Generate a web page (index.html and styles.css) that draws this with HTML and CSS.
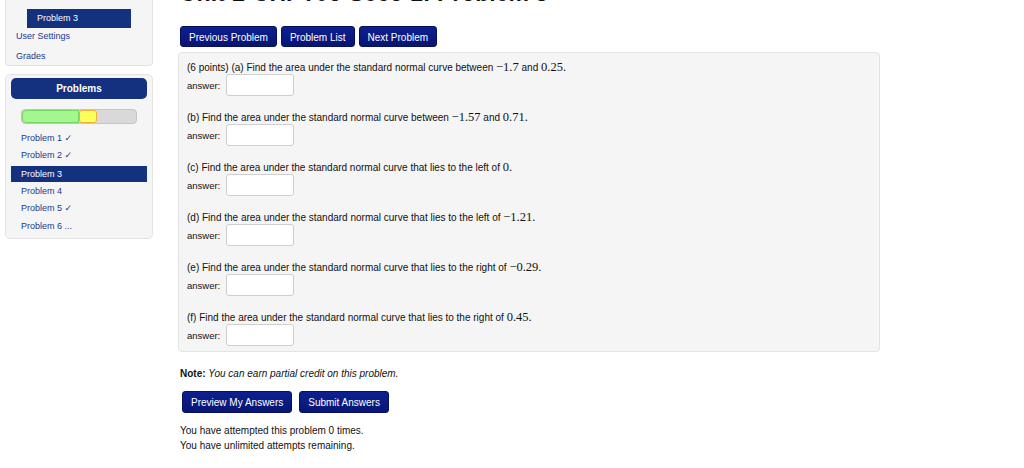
FILE: index.html
```html
<!DOCTYPE html>
<html lang="en">
<head>
    <meta charset="UTF-8">
    <title>Unit-2-CHPT06-Sec6-1: Problem 3</title>
    <link rel="stylesheet" href="styles.css">
</head>
<body>
    <div class="page">
        <div class="sidebar">
            <div class="navBox">
                <div class="navSet">Unit-2-CHPT06-Sec6-1</div>
                <div class="navCurrent">Problem 3</div>
                <div class="navLink">User Settings</div>
                <div class="navLink last">Grades</div>
            </div>
            <div class="probBox">
                <div class="probHead">Problems</div>
                <div class="progress">
                    <span class="done"></span>
                    <span class="partial"></span>
                </div>
                <ul class="probList">
                    <li>Problem 1 <span class="tick">&#10003;</span></li>
                    <li>Problem 2 <span class="tick">&#10003;</span></li>
                    <li class="active">Problem 3</li>
                    <li>Problem 4</li>
                    <li>Problem 5 <span class="tick">&#10003;</span></li>
                    <li>Problem 6 ...</li>
                </ul>
            </div>
        </div>
        <div class="main">
            <h1>Unit-2-CHPT06-Sec6-1: Problem 3</h1>
            <div class="topBtns">
                <span class="btn">Previous Problem</span>
                <span class="btn">Problem List</span>
                <span class="btn">Next Problem</span>
            </div>
            <div class="problem">
                <div class="part">
                    <p>(6 points) (a) Find the area under the standard normal curve between <span class="m">&minus;1.7</span> and <span class="m">0.25.</span></p>
                    <div class="answer">answer: <span class="input"></span></div>
                </div>
                <div class="part">
                    <p>(b) Find the area under the standard normal curve between <span class="m">&minus;1.57</span> and <span class="m">0.71.</span></p>
                    <div class="answer">answer: <span class="input"></span></div>
                </div>
                <div class="part">
                    <p>(c) Find the area under the standard normal curve that lies to the left of <span class="m">0.</span></p>
                    <div class="answer">answer: <span class="input"></span></div>
                </div>
                <div class="part">
                    <p>(d) Find the area under the standard normal curve that lies to the left of <span class="m">&minus;1.21.</span></p>
                    <div class="answer">answer: <span class="input"></span></div>
                </div>
                <div class="part">
                    <p>(e) Find the area under the standard normal curve that lies to the right of <span class="m">&minus;0.29.</span></p>
                    <div class="answer">answer: <span class="input"></span></div>
                </div>
                <div class="part">
                    <p>(f) Find the area under the standard normal curve that lies to the right of <span class="m">0.45.</span></p>
                    <div class="answer">answer: <span class="input"></span></div>
                </div>
            </div>
            <p class="note"><b>Note:</b> <i>You can earn partial credit on this problem.</i></p>
            <div class="submitBtns">
                <span class="btn big">Preview My Answers</span>
                <span class="btn big">Submit Answers</span>
            </div>
            <p class="attempts">You have attempted this problem 0 times.<br>You have unlimited attempts remaining.</p>
        </div>
    </div>
</body>
</html>
```

FILE: styles.css
```css
*{
    padding: 0px;
    margin: 0px;
    list-style: none;
    box-sizing: border-box;
}
body{
    font-family: "Liberation Sans", Arial, sans-serif;
    color: #111;
    background: #fff;
}
.page{
    display: flex;
    margin-top: -14px;
}
.sidebar{
    width: 148px;
    margin-left: 5px;
}
.navBox{
    background: #f5f5f5;
    border: 1px solid #e3e3e3;
    border-top: none;
    border-radius: 0 0 4px 4px;
    font-size: 9px;
}
.navSet{
    height: 18px;
    line-height: 18px;
    padding-left: 27px;
    color: #1a3a8f;
}
.navCurrent{
    margin: 5px 21px -2px 21px;
    height: 19px;
    line-height: 19px;
    padding-left: 10px;
    background: #13317f;
    color: #fff;
}
.navLink{
    padding-left: 10px;
    height: 20px;
    line-height: 20px;
    color: #1a3a8f;
}
.navLink.last{
    height: 19px;
}
.probBox{
    margin-top: 8px;
    background: #f5f5f5;
    border: 1px solid #e3e3e3;
    border-radius: 5px;
    padding: 3px 5px 3px;
}
.probHead{
    height: 21px;
    line-height: 21px;
    background: #13317f;
    color: #fff;
    font-weight: bold;
    font-size: 10px;
    text-align: center;
    border-radius: 5px;
}
.progress{
    display: flex;
    margin: 10px 10px 0 10px;
    height: 15px;
    background: #d9d9d9;
    border: 1px solid #c4c4c4;
    border-radius: 4px;
    overflow: hidden;
}
.progress .done{
    width: 57px;
    background: #a4f68f;
    border: 1px solid #74d85f;
    border-radius: 4px 0 0 4px;
}
.progress .partial{
    width: 18px;
    background: #ffff5e;
    border: 1px solid #f2b134;
    border-radius: 3px;
}
.probList{
    margin-top: 6px;
    font-size: 9px;
    color: #1a3a8f;
}
.probList li{
    height: 17.4px;
    line-height: 17.4px;
    padding-left: 10px;
}
.probList .tick{
    font-family: "DejaVu Sans", sans-serif;
    font-size: 9px;
}
.probList .active{
    background: #13317f;
    color: #fff;
    height: 16px;
    line-height: 16px;
    margin: 1px 0;
}
.main{
    margin-left: 25px;
    width: 702px;
    font-size: 10px;
}
h1{
    font-size: 23px;
    line-height: 20px;
    height: 20px;
    margin-top: -3px;
    margin-left: 2px;
    white-space: nowrap;
}
.topBtns{
    display: flex;
    gap: 4px;
    margin-top: 23px;
    margin-left: 2px;
}
.btn{
    display: inline-block;
    height: 21px;
    line-height: 21px;
    padding: 0 8px;
    color: #fff;
    background: linear-gradient(#0c2090, #081574);
    border: 1px solid #07115a;
    border-radius: 3px;
}
.problem{
    margin-top: 5px;
    background: #f5f5f5;
    border: 1px solid #e3e3e3;
    border-radius: 4px;
    padding: 7px 8px 5px;
}
.part{
    margin-bottom: 14px;
}
.part:last-child{
    margin-bottom: 0;
}
.part p{
    height: 14px;
    line-height: 14px;
}
.m{
    font-family: "Liberation Serif", "Times New Roman", serif;
    font-size: 12.5px;
}
.answer{
    display: flex;
    align-items: center;
    gap: 6px;
    height: 22px;
    font-size: 9.5px;
}
.input{
    display: inline-block;
    width: 68px;
    height: 22px;
    background: #fff;
    border: 1px solid #cfcfcf;
    border-radius: 3px;
}
.note{
    margin-top: 16px;
    margin-left: 2px;
    font-size: 10px;
    line-height: 12px;
}
.submitBtns{
    display: flex;
    gap: 7px;
    margin-top: 11px;
    margin-left: 4px;
}
.btn.big{
    height: 22px;
    line-height: 22px;
    font-size: 10px;
}
.attempts{
    margin-top: 10px;
    margin-left: 2px;
    font-size: 10px;
    line-height: 15px;
}
```
